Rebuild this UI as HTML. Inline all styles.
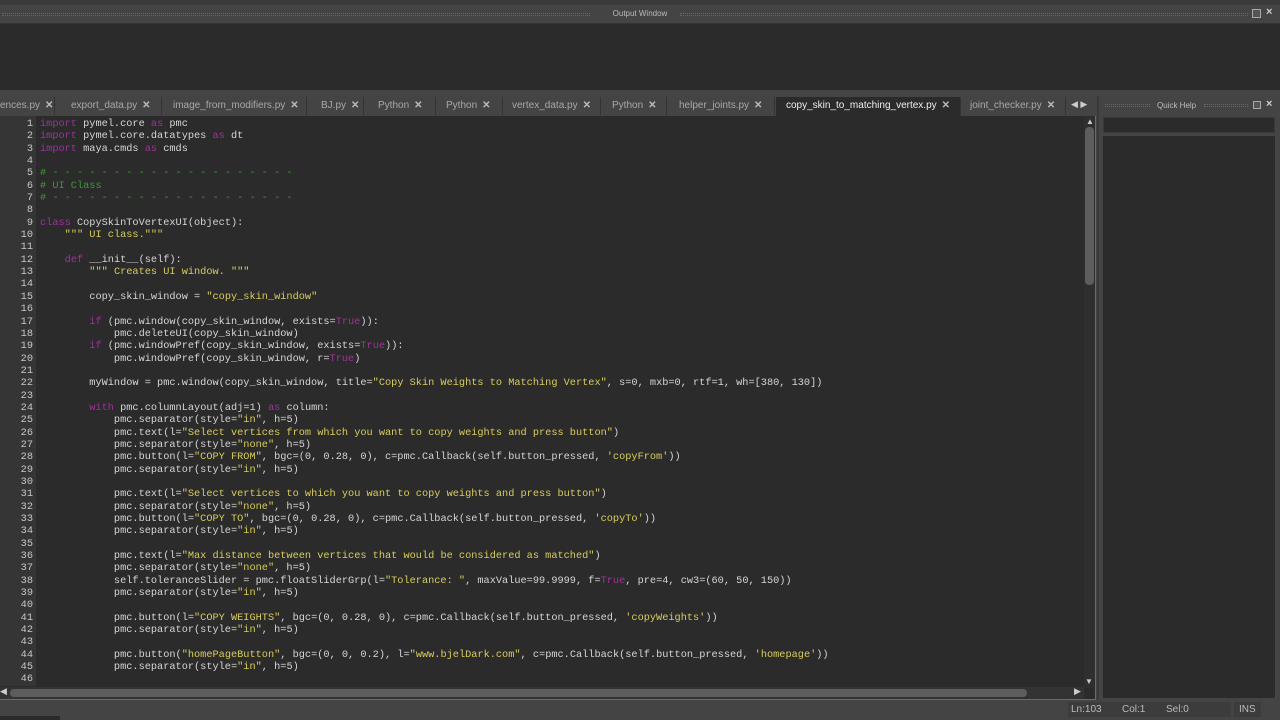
<!DOCTYPE html>
<html><head><meta charset="utf-8"><style>
*{margin:0;padding:0;box-sizing:border-box}
body{width:1280px;height:720px;background:#444;position:relative;overflow:hidden;font-family:"Liberation Sans",sans-serif}
.abs{position:absolute;white-space:nowrap}
.tab{position:absolute;top:97px;height:18px;font-size:10px;color:#a8a8a8;line-height:18px;border-right:1px solid #333;white-space:nowrap}
.tab b{font-weight:bold;color:#bbb;margin-left:5px;font-size:10px}
pre.abs{font-family:"Liberation Mono",monospace;font-size:10.27px;line-height:12.34px;color:#d6d6d6;white-space:pre}
.k{color:#a0309e}.s{color:#d9cd5c}.c{color:#3f9a34}
.dots{position:absolute;height:3px;border-top:1px dotted #666;border-bottom:1px dotted #666}
.st{position:absolute;top:702px;font-size:10px;color:#bbb;line-height:15px;white-space:nowrap}
</style></head><body>
<div class="abs" style="left:0;top:0;width:1280px;height:5px;background:#3a3a3a"></div>
<div class="abs" style="left:0;top:6px;width:1280px;height:17px;background:#444"></div>
<div class="dots" style="left:2px;top:13px;width:588px"></div>
<div class="dots" style="left:680px;top:13px;width:568px"></div>
<div class="abs" style="left:0;top:9px;width:1280px;text-align:center;font-size:8px;color:#bbb">Output Window</div>
<div class="abs" style="left:1252px;top:9px;width:9px;height:9px;border:1px solid #aaa;background:#555"></div>
<div class="abs" style="left:1266px;top:6px;font-size:11px;color:#ccc;font-weight:bold">×</div>
<div class="abs" style="left:0;top:23px;width:1280px;height:67px;background:#2b2b2b;border-top:1px solid #333"></div>
<div class="abs" style="left:0;top:96px;width:1097px;height:20px;background:#444"></div>
<div class="tab" style="left:0;width:55px">ences.py<b>✕</b></div>
<div class="tab" style="left:58px;width:104px;padding-left:13px">export_data.py<b>✕</b></div>
<div class="tab" style="left:163px;width:144px;padding-left:10px">image_from_modifiers.py<b>✕</b></div>
<div class="tab" style="left:308px;width:56px;padding-left:13px">BJ.py<b>✕</b></div>
<div class="tab" style="left:365px;width:71px;padding-left:13px">Python<b>✕</b></div>
<div class="tab" style="left:437px;width:66px;padding-left:9px">Python<b>✕</b></div>
<div class="tab" style="left:504px;width:97px;padding-left:8px">vertex_data.py<b>✕</b></div>
<div class="tab" style="left:602px;width:65px;padding-left:10px">Python<b>✕</b></div>
<div class="tab" style="left:668px;width:107px;padding-left:11px">helper_joints.py<b>✕</b></div>
<div class="tab" style="left:776px;width:185px;padding-left:10px;background:#2b2b2b;color:#eee;height:19px">copy_skin_to_matching_vertex.py<b>✕</b></div>
<div class="tab" style="left:962px;width:104px;padding-left:8px">joint_checker.py<b>✕</b></div>
<div class="abs" style="left:1071px;top:99px;font-size:9px;color:#ccc">◀ ▶</div>
<div class="abs" style="left:0;top:116px;width:1096px;height:584px;background:#2b2b2b;border-right:1px solid #5a7082;border-bottom:1px solid #5a7082"></div>
<div class="abs" style="left:0;top:116px;width:36px;height:570px;background:#353535"></div>
<pre class="abs" style="left:0;top:118px;width:33px;text-align:right;color:#c8c8c8">1
2
3
4
5
6
7
8
9
10
11
12
13
14
15
16
17
18
19
20
21
22
23
24
25
26
27
28
29
30
31
32
33
34
35
36
37
38
39
40
41
42
43
44
45
46</pre>
<pre class="abs" style="left:40px;top:118px"><span class="k">import</span> pymel.core <span class="k">as</span> pmc
<span class="k">import</span> pymel.core.datatypes <span class="k">as</span> dt
<span class="k">import</span> maya.cmds <span class="k">as</span> cmds

<span class="c"># - - - - - - - - - - - - - - - - - - - -</span>
<span class="c"># UI Class</span>
<span class="c"># - - - - - - - - - - - - - - - - - - - -</span>

<span class="k">class</span> CopySkinToVertexUI(object):
    <span class="s">""" UI class."""</span>

    <span class="k">def</span> __init__(self):
        <span class="s">""" Creates UI window. """</span>

        copy_skin_window = <span class="s">"copy_skin_window"</span>

        <span class="k">if</span> (pmc.window(copy_skin_window, exists=<span class="k">True</span>)):
            pmc.deleteUI(copy_skin_window)
        <span class="k">if</span> (pmc.windowPref(copy_skin_window, exists=<span class="k">True</span>)):
            pmc.windowPref(copy_skin_window, r=<span class="k">True</span>)

        myWindow = pmc.window(copy_skin_window, title=<span class="s">"Copy Skin Weights to Matching Vertex"</span>, s=0, mxb=0, rtf=1, wh=[380, 130])

        <span class="k">with</span> pmc.columnLayout(adj=1) <span class="k">as</span> column:
            pmc.separator(style=<span class="s">"in"</span>, h=5)
            pmc.text(l=<span class="s">"Select vertices from which you want to copy weights and press button"</span>)
            pmc.separator(style=<span class="s">"none"</span>, h=5)
            pmc.button(l=<span class="s">"COPY FROM"</span>, bgc=(0, 0.28, 0), c=pmc.Callback(self.button_pressed, <span class="s">'copyFrom'</span>))
            pmc.separator(style=<span class="s">"in"</span>, h=5)

            pmc.text(l=<span class="s">"Select vertices to which you want to copy weights and press button"</span>)
            pmc.separator(style=<span class="s">"none"</span>, h=5)
            pmc.button(l=<span class="s">"COPY TO"</span>, bgc=(0, 0.28, 0), c=pmc.Callback(self.button_pressed, <span class="s">'copyTo'</span>))
            pmc.separator(style=<span class="s">"in"</span>, h=5)

            pmc.text(l=<span class="s">"Max distance between vertices that would be considered as matched"</span>)
            pmc.separator(style=<span class="s">"none"</span>, h=5)
            self.toleranceSlider = pmc.floatSliderGrp(l=<span class="s">"Tolerance: "</span>, maxValue=99.9999, f=<span class="k">True</span>, pre=4, cw3=(60, 50, 150))
            pmc.separator(style=<span class="s">"in"</span>, h=5)

            pmc.button(l=<span class="s">"COPY WEIGHTS"</span>, bgc=(0, 0.28, 0), c=pmc.Callback(self.button_pressed, <span class="s">'copyWeights'</span>))
            pmc.separator(style=<span class="s">"in"</span>, h=5)

            pmc.button(<span class="s">"homePageButton"</span>, bgc=(0, 0, 0.2), l=<span class="s">"www.bjelDark.com"</span>, c=pmc.Callback(self.button_pressed, <span class="s">'homepage'</span>))
            pmc.separator(style=<span class="s">"in"</span>, h=5)
</pre>
<div class="abs" style="left:1084px;top:116px;width:11px;height:572px;background:#2f2f2f"></div>
<div class="abs" style="left:1086px;top:117px;font-size:8px;color:#ccc">▲</div>
<div class="abs" style="left:1085px;top:127px;width:9px;height:158px;background:#5d5d5d;border-radius:4px"></div>
<div class="abs" style="left:1085px;top:677px;font-size:8px;color:#ccc">▼</div>
<div class="abs" style="left:0;top:687px;width:1084px;height:12px;background:#333"></div>
<div class="abs" style="left:10px;top:689px;width:1017px;height:8px;background:#5d5d5d;border-radius:4px"></div>
<div class="abs" style="left:1074px;top:686px;font-size:9px;color:#ccc">▶</div>
<div class="abs" style="left:0;top:686px;font-size:9px;color:#ccc">◀</div>
<div class="abs" style="left:1068px;top:702px;width:163px;height:15px;background:#3c3c3c"></div>
<div class="st" style="left:1071px">Ln:103</div>
<div class="st" style="left:1122px">Col:1</div>
<div class="st" style="left:1166px">Sel:0</div>
<div class="abs" style="left:1234px;top:702px;width:27px;height:15px;background:#3c3c3c"></div>
<div class="st" style="left:1239px">INS</div>
<div class="abs" style="left:0;top:716px;width:60px;height:4px;background:#2b2b2b"></div>
<div class="abs" style="left:1097px;top:96px;width:183px;height:604px;background:#444;border-left:2px solid #3a3a3a"></div>
<div class="dots" style="left:1105px;top:104px;width:45px"></div>
<div class="dots" style="left:1204px;top:104px;width:44px"></div>
<div class="abs" style="left:1157px;top:101px;font-size:8px;color:#bbb">Quick Help</div>
<div class="abs" style="left:1253px;top:101px;width:8px;height:8px;border:1px solid #aaa;background:#555"></div>
<div class="abs" style="left:1266px;top:98px;font-size:11px;color:#ccc;font-weight:bold">×</div>
<div class="abs" style="left:1103px;top:117px;width:172px;height:16px;background:#2b2b2b;border:1px solid #3a3a3a"></div>
<div class="abs" style="left:1103px;top:136px;width:172px;height:562px;background:#2b2b2b"></div>
</body></html>
